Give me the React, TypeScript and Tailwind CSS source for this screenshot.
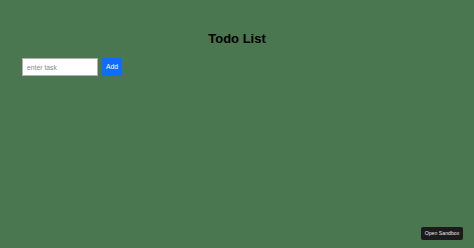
import React from "react";

export default function App() {
  return (
    <div
      className="relative w-[474px] h-[248px] bg-[#4a7650] overflow-hidden"
      style={{ fontFamily: '"Liberation Sans", Arial, sans-serif' }}
    >
      <div className="flex flex-col px-[22px] pt-[31px]">
        <h1 className="text-center text-[13px] font-bold text-black leading-[15px]">Todo List</h1>
        <div className="flex items-center mt-[12px] gap-[4px]">
          <input
            placeholder="enter task"
            className="w-[76px] h-[18px] bg-white border border-[#b0b0b0] px-[4px] text-[6.8px] text-black placeholder:text-[#8a8a8a] outline-none"
          />
          <button className="w-[20px] h-[18px] bg-[#0d6efd] text-white text-[6.8px] flex items-center justify-center">
            Add
          </button>
        </div>
      </div>
      <button className="absolute left-[421px] top-[227px] w-[42px] h-[13px] rounded-[2px] bg-[#1b1b1b] text-[#e8e8e8] text-[5.2px] flex items-center justify-center">
        Open Sandbox
      </button>
    </div>
  );
}
